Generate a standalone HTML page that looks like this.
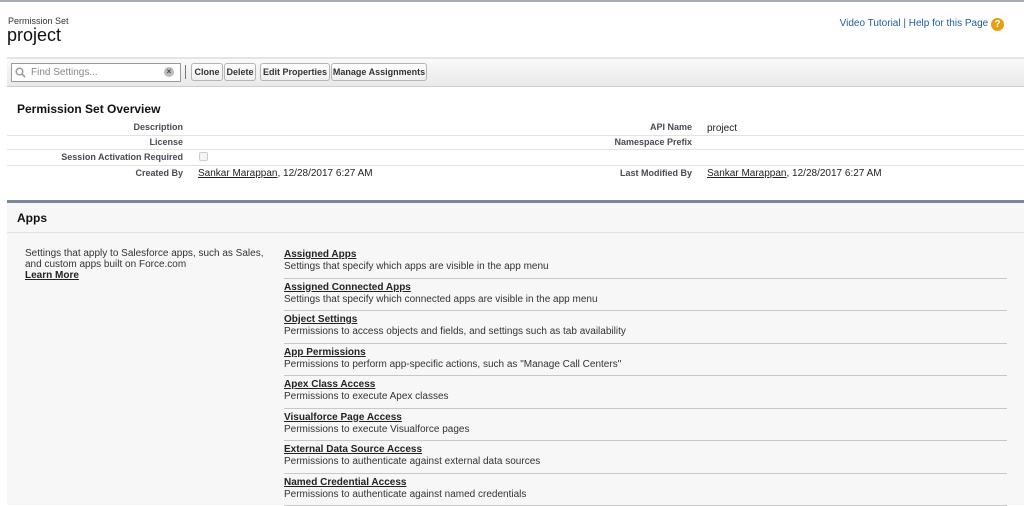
<!DOCTYPE html>
<html><head><meta charset="utf-8"><style>
*{margin:0;padding:0;box-sizing:border-box}
body{width:1024px;height:505px;overflow:hidden;background:#fff;font-family:"Liberation Sans",Arial,sans-serif;color:#222;position:relative}
.a{position:absolute;white-space:nowrap}
.topline{position:absolute;left:0;top:0;width:1024px;height:2px;background:#a5aab8}
.lbl{font-size:9px;font-weight:bold;color:#4a4a56;text-align:right}
.val{font-size:10px;color:#222}
.u{text-decoration:underline;color:#222}
.sep{position:absolute;height:1px;background:#e3e3e3}
.btn{position:absolute;top:63px;height:18px;border:1px solid #b5b5b5;border-radius:3px;background:linear-gradient(#fff,#f0f0f0);font-size:9px;font-weight:bold;color:#333;line-height:17px;text-align:center}
.it{position:absolute;left:284px;width:723px;height:32.5px;border-bottom:1px solid #c8c8c8}
.it b{display:block;font-size:10px;text-decoration:underline;color:#222;margin-top:3px;line-height:12px}
.it span{display:block;font-size:10px;color:#333;line-height:11px}
</style></head><body>
<div class="topline"></div>
<div class="a" style="left:8px;top:16px;font-size:9px;color:#333">Permission Set</div>
<div class="a" style="left:7px;top:25px;font-size:18px;color:#111">project</div>
<div class="a" style="right:20px;top:18px;font-size:10px;color:#1f5d9e">Video Tutorial | Help for this Page <span style="display:inline-block;width:13px;height:13px;border-radius:50%;background:#e8a012;color:#fff;font-size:10px;font-weight:bold;text-align:center;line-height:13px;vertical-align:-1px">?</span></div>

<div style="position:absolute;left:7px;top:57px;width:1017px;height:30px;background:linear-gradient(#fafafa,#e9e9e9);border-top:2px solid #e4e4e4;border-bottom:1px solid #cfcfcf"></div>
<div style="position:absolute;left:11px;top:63px;width:170px;height:19px;background:#fff;border:1px solid #9a9a9a"></div>
<svg class="a" style="left:15px;top:67px" width="11" height="11" viewBox="0 0 11 11"><circle cx="4.5" cy="4.5" r="3.3" fill="none" stroke="#999" stroke-width="1.4"/><path d="M7 7l3 3" stroke="#999" stroke-width="1.6"/></svg>
<div class="a" style="left:31px;top:67px;font-size:10px;color:#888">Find Settings...</div>
<div class="a" style="left:164px;top:67px;width:10px;height:10px;border-radius:50%;background:#bbb;color:#444;font-size:8px;line-height:10px;text-align:center;font-weight:bold">×</div>
<div class="a" style="left:185px;top:65px;width:1px;height:14px;background:#777"></div>
<div class="btn" style="left:191px;width:32px">Clone</div>
<div class="btn" style="left:224px;width:32px">Delete</div>
<div class="btn" style="left:260px;width:70px">Edit Properties</div>
<div class="btn" style="left:331px;width:96px">Manage Assignments</div>

<div class="a" style="left:17px;top:102px;font-size:12px;font-weight:bold;color:#111">Permission Set Overview</div>
<div class="a lbl" style="left:0;width:183px;top:122px">Description</div>
<div class="a lbl" style="left:0;width:183px;top:137px">License</div>
<div class="a lbl" style="left:0;width:183px;top:152px">Session Activation Required</div>
<div class="a lbl" style="left:0;width:183px;top:168px">Created By</div>
<div class="a lbl" style="left:400px;width:292px;top:122px">API Name</div>
<div class="a lbl" style="left:400px;width:292px;top:137px">Namespace Prefix</div>
<div class="a lbl" style="left:400px;width:292px;top:168px">Last Modified By</div>
<div class="sep" style="left:7px;top:135px;width:1017px"></div>
<div class="sep" style="left:7px;top:149px;width:1017px"></div>
<div class="sep" style="left:7px;top:165px;width:1017px"></div>
<div class="a val" style="left:707px;top:123px">project</div>
<div class="a" style="left:199px;top:152px;width:9px;height:9px;border:1px solid #ccc;border-radius:2px;background:#f4f4f4"></div>
<div class="a val" style="left:198px;top:168px"><span class="u">Sankar Marappan</span>, 12/28/2017 6:27 AM</div>
<div class="a val" style="left:707px;top:168px"><span class="u">Sankar Marappan</span>, 12/28/2017 6:27 AM</div>

<div style="position:absolute;left:7px;top:200px;width:1017px;height:305px;background:#f7f7f7;border-top:3px solid #7b879c"></div>
<div class="a" style="left:17px;top:211px;font-size:12px;font-weight:bold;color:#111">Apps</div>
<div class="sep" style="left:7px;top:232px;width:1017px;background:#e2e2e2"></div>
<div class="a" style="left:25px;top:248px;font-size:10px;color:#333;line-height:11px">Settings that apply to Salesforce apps, such as Sales,<br>and custom apps built on Force.com<br><b class="u">Learn More</b></div>

<div class="it" style="top:246px"><b>Assigned Apps</b><span>Settings that specify which apps are visible in the app menu</span></div>
<div class="it" style="top:278.5px"><b>Assigned Connected Apps</b><span>Settings that specify which connected apps are visible in the app menu</span></div>
<div class="it" style="top:311px"><b>Object Settings</b><span>Permissions to access objects and fields, and settings such as tab availability</span></div>
<div class="it" style="top:343.5px"><b>App Permissions</b><span>Permissions to perform app-specific actions, such as "Manage Call Centers"</span></div>
<div class="it" style="top:376px"><b>Apex Class Access</b><span>Permissions to execute Apex classes</span></div>
<div class="it" style="top:408.5px"><b>Visualforce Page Access</b><span>Permissions to execute Visualforce pages</span></div>
<div class="it" style="top:441px"><b>External Data Source Access</b><span>Permissions to authenticate against external data sources</span></div>
<div class="it" style="top:473.5px"><b>Named Credential Access</b><span>Permissions to authenticate against named credentials</span></div>
</body></html>
